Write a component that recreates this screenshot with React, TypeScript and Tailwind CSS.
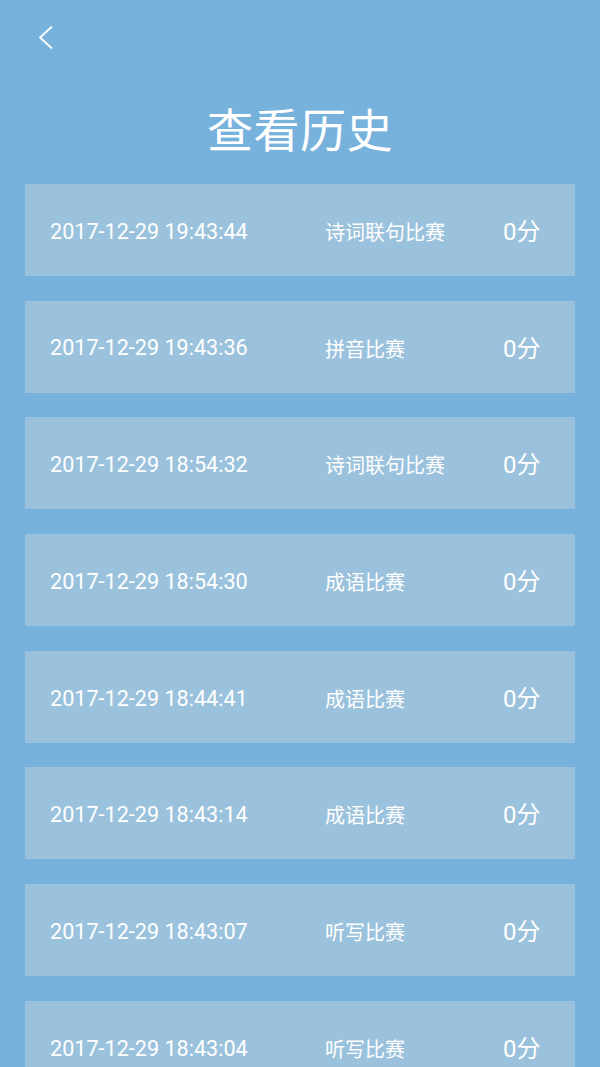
import React from "react";

const rows = [
  ["2017-12-29 19:43:44", "诗词联句比赛"],
  ["2017-12-29 19:43:36", "拼音比赛"],
  ["2017-12-29 18:54:32", "诗词联句比赛"],
  ["2017-12-29 18:54:30", "成语比赛"],
  ["2017-12-29 18:44:41", "成语比赛"],
  ["2017-12-29 18:43:14", "成语比赛"],
  ["2017-12-29 18:43:07", "听写比赛"],
  ["2017-12-29 18:43:04", "听写比赛"],
];

const font = { fontFamily: '"Roboto", "Noto Sans CJK SC", sans-serif' };

export default function App() {
  return (
    <div
      className="w-[600px] h-[1067px] overflow-hidden bg-[#77b2dc] text-white"
      style={font}
    >
      <div className="h-[184px] flex flex-col">
        <div className="h-[74px] pt-[26px] pl-[38px]">
          <svg width="16" height="23" viewBox="0 0 16 23" fill="none">
            <path
              d="M13.5 1 L2 11.5 L13.5 22"
              stroke="white"
              strokeWidth="1.8"
              strokeLinecap="round"
              strokeLinejoin="round"
            />
          </svg>
        </div>
        <div className="flex-1 flex items-center justify-center pb-[4px]">
          <span className="text-[46px] leading-none font-['Noto_Sans_CJK_SC'] tracking-[0.5px]">
            查看历史
          </span>
        </div>
      </div>
      <div className="flex flex-col gap-[24.7px] px-[25px]">
        {rows.map(([d, c], i) => (
          <div
            key={i}
            className="h-[92px] shrink-0 bg-[#9bc2dc] flex items-center pl-[25px] pt-[4px]"
          >
            <div className="w-[275px] text-[21.6px] font-['Roboto']">
              {d}
            </div>
            <div className="w-[178px] text-[20px] font-['Noto_Sans_CJK_SC']">
              {c}
            </div>
            <div className="text-[24px]">0分</div>
          </div>
        ))}
      </div>
    </div>
  );
}
